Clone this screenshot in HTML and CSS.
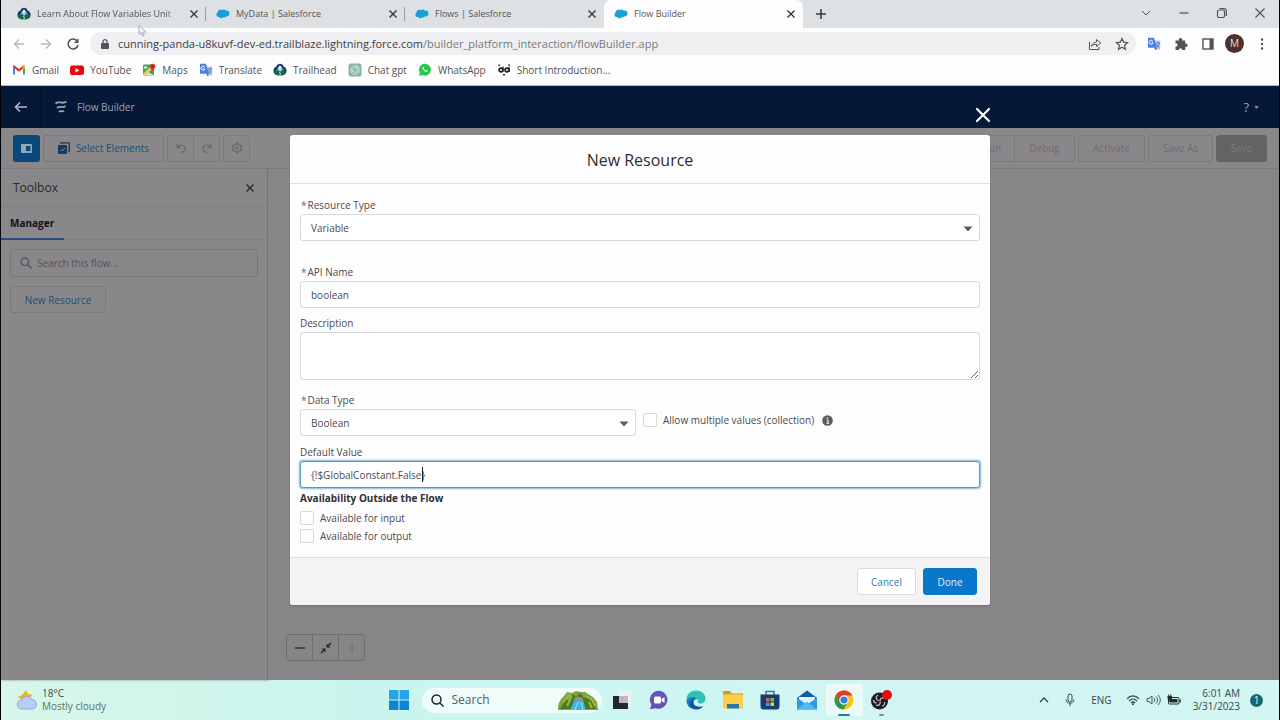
FILE: index.html
```html
<!DOCTYPE html>
<html lang="en">
<head>
<meta charset="utf-8">
<title>Flow Builder</title>
<link rel="stylesheet" href="styles.css">
</head>
<body>
<svg class="defs" aria-hidden="true">
  <symbol id="cloud" viewBox="0 0 14 10"><path fill="#16a0d8" d="M3 1.2C4 .3 5.3.5 6 1.3 7 .2 9 .3 9.700 1.700 11.500 1 13.600 2.300 13.500 4.500c0 2-1.800 3.300-3.700 2.900C9.200 8.600 7.700 8.800 6.900 8.300 6 9.900 3.900 9.700 3.300 8.100 1.500 8.300.3 7 .5 5.500.5 4.500 1 4 1.600 3.500 1.300 2.600 2 1.600 3 1.200z"/></symbol>
  <symbol id="trail" viewBox="0 0 14 14"><path fill="#1d4068" d="M7 .8c2 0 3.200 1.200 3.500 2.600 1.800.5 3.100 2.300 3.100 4.400 0 2.500-1.600 4.200-3.600 4.400H4C2 12 .4 10.300.4 7.800c0-2.100 1.300-3.900 3.100-4.400C3.800 2 5 .8 7 .8z"/><path fill="#8fd0ee" d="M7 2.500 11.600 8.500H2.400z"/><path fill="#fff" d="m7 2.500 2 2.700-1 .4-1-.7-1 .8-1-.5z"/><path fill="#1e6b45" d="M1.500 8.500 4 6.500l3 2 3-2 2.500 2c0 2-1.500 3.700-3.500 3.700H5c-2 0-3.500-1.700-3.500-3.700z"/><path d="M7.300 8.500c-2 1 1.600 2-.8 3.700" fill="none" stroke="#e5f3e2"/></symbol>
  <symbol id="x" viewBox="0 0 10 10"><path d="M1.500 1.500l7 7m0-7l-7 7" fill="none" stroke="currentColor" stroke-width="1.400"/></symbol>
  <symbol id="translate" viewBox="0 0 14 14"><path fill="#b9c9ea" d="M6 3.500h7.200v9.300H8z"/><path fill="#4b80e8" d="M1 .8h6l3 10H1z"/><path fill="#2b5bc2" d="m7.500 10.800 2.500 0-1.500 2.500z"/><path d="M6 5.700H4.300M5.700 4A2 2 0 1 0 6 6" stroke="#fff" fill="none"/><path d="M9 6.200h4M11 5v1.200M12.400 6.500c-.4 1.800-1.500 3-2.700 3.800M9.800 7.500c.5 1.400 1.500 2.300 2.700 3" stroke="#3f6fc4" stroke-width=".8" fill="none"/></symbol>
  <symbol id="down" viewBox="0 0 10 6"><path d="M.5.500h9L5 5.600z" fill="currentColor"/></symbol>
</svg>
<div class="screen">
  <header class="browser">
    <div class="tabstrip">
      <div class="tab"><svg class="i14"><use href="#trail"/></svg><span class="tab-title fade">Learn About Flow Variables Unit</span><button class="tab-x" aria-label="Close tab"><svg class="i10"><use href="#x"/></svg></button></div>
      <div class="tab"><svg class="cloud"><use href="#cloud"/></svg><span class="tab-title">MyData | Salesforce</span><button class="tab-x" aria-label="Close tab"><svg class="i10"><use href="#x"/></svg></button></div>
      <div class="tab last"><svg class="cloud"><use href="#cloud"/></svg><span class="tab-title">Flows | Salesforce</span><button class="tab-x" aria-label="Close tab"><svg class="i10"><use href="#x"/></svg></button></div>
      <div class="tab active"><svg class="cloud"><use href="#cloud"/></svg><span class="tab-title">Flow Builder</span><button class="tab-x" aria-label="Close tab"><svg class="i10"><use href="#x"/></svg></button></div>
      <button class="new-tab" aria-label="New tab"><svg width="12" height="12" viewBox="0 0 12 12"><path d="M6 1v10M1 6h10" stroke="currentColor" stroke-width="1.500"/></svg></button>
      <div class="win">
        <button aria-label="Search tabs"><svg width="12" height="12" viewBox="0 0 12 12"><path d="m2 4 4 4 4-4" fill="none" stroke="currentColor"/></svg></button>
        <button aria-label="Minimize"><svg width="12" height="12" viewBox="0 0 12 12"><path d="M1.500 6h9" stroke="currentColor" stroke-width="1.200"/></svg></button>
        <button aria-label="Restore"><svg width="12" height="12" viewBox="0 0 12 12"><rect x="1.500" y="3" width="7" height="7.500" rx="1.500" fill="none" stroke="currentColor" stroke-width="1.200"/><path d="M3.500 1.500H8a2.200 2.200 0 0 1 2.300 2.200V9" fill="none" stroke="currentColor" stroke-width="1.200"/></svg></button>
        <button aria-label="Close"><svg width="12" height="12" viewBox="0 0 12 12"><path d="m1.500 1.500 9 9m0-9-9 9" stroke="currentColor" stroke-width="1.100"/></svg></button>
      </div>
    </div>
    <div class="navbar">
      <button class="nav dim" aria-label="Back"><svg width="12" height="12" viewBox="0 0 12 12"><path d="M11 6H1.500M6 1.500 1.500 6 6 10.500" fill="none" stroke="currentColor" stroke-width="1.300"/></svg></button>
      <button class="nav dim" aria-label="Forward"><svg width="12" height="12" viewBox="0 0 12 12"><path d="M1 6h9.500M6 1.500 10.500 6 6 10.500" fill="none" stroke="currentColor" stroke-width="1.300"/></svg></button>
      <button class="nav" aria-label="Reload"><svg width="14" height="14" viewBox="0 0 14 14"><path d="M11.500 4.500A5 5 0 1 0 12 8" fill="none" stroke="currentColor" stroke-width="1.500"/><path d="M12.500 1v5H8z" fill="currentColor"/></svg></button>
      <div class="omnibox">
        <svg width="8" height="10" viewBox="0 0 8 10"><rect y="4" width="8" height="6" rx="1" fill="#4f5256"/><path d="M2 4.500V2.700a2 2 0 0 1 4 0v1.800" fill="none" stroke="#4f5256" stroke-width="1.200"/></svg>
        <span class="url"><b>cunning-panda-u8kuvf-dev-ed.trailblaze.lightning.force.com</b>/builder_platform_interaction/flowBuilder.app</span>
        <button aria-label="Share"><svg width="14" height="14" viewBox="0 0 14 14"><path d="M1.500 5v7.500h9.500V10" fill="none" stroke="currentColor"/><path d="M3.500 9.500C4 6.500 6 5.300 8.500 5V2.500L12.800 6 8.500 9.500V7.300c-2 0-3.700.6-5 2.200z" fill="none" stroke="currentColor"/></svg></button>
        <button aria-label="Bookmark"><svg width="14" height="14" viewBox="0 0 14 14"><path d="m7 1.500 1.600 3.700 4 .4-3 2.700.9 4L7 10.200l-3.500 2.100.9-4-3-2.700 4-.4z" fill="none" stroke="currentColor" stroke-width="1.200"/></svg></button>
      </div>
      <button class="nav" aria-label="Google Translate"><svg class="i14"><use href="#translate"/></svg></button>
      <button class="nav" aria-label="Extensions"><svg width="14" height="14" viewBox="0 0 14 14"><path fill="currentColor" d="M1.500 3.500h3.300a1.800 1.800 0 1 1 3.400 0h3v3a1.800 1.800 0 1 1 0 3.400v3H8.300a1.700 1.700 0 1 0-3.400 0H1.500V9.500a1.600 1.600 0 1 0 0-3.100z"/></svg></button>
      <button class="nav" aria-label="Side panel"><svg width="12" height="12" viewBox="0 0 12 12"><rect x="1" y="1" width="10" height="10" fill="none" stroke="currentColor" stroke-width="1.400"/><path d="M7.500 1H11v10H7.500z" fill="currentColor"/></svg></button>
      <button class="nav" aria-label="Profile"><span class="avatar">M</span></button>
      <button class="nav" aria-label="Menu"><svg width="4" height="14" viewBox="0 0 4 14" fill="currentColor"><circle cx="2" cy="2.500" r="1.200"/><circle cx="2" cy="7" r="1.200"/><circle cx="2" cy="11.500" r="1.200"/></svg></button>
    </div>
    <nav class="bookmarks">
      <a href="#"><svg class="i14" viewBox="0 0 14 14"><path d="M1 2.500 3 3v8.500H1.500L1 11z" fill="#4285f4"/><path d="m11 3 2-.500V11l-.5.500H11z" fill="#34a853"/><path d="M1.500 3.200 7 7.300l5.500-4.100" fill="none" stroke="#e0382c" stroke-width="2.200"/><path d="M11 3.500 13 2v3l-2 1.500z" fill="#fbbc04"/></svg>Gmail</a>
      <a href="#"><svg class="i14" viewBox="0 0 14 14"><rect y="2.500" width="14" height="9.500" rx="2.200" fill="#e8050d"/><path d="m5.500 5 4 2.200-4 2.300z" fill="#fff"/></svg>YouTube</a>
      <a href="#"><svg class="i14" viewBox="0 0 14 14"><rect x="1" y="1.500" width="11" height="11" rx="1.500" fill="#3ba65b"/><path d="m1 11 9-9h2v2l-8.500 8.500H2z" fill="#f8cf42"/><path d="m6.500 9 5.500 3.500H3.500z" fill="#d9dce0"/><path d="M2 3.500h3v2H2z" fill="#eaf5ee"/><path d="M10.500 8.500C10 6.500 7.800 5.500 7.800 3.500a2.800 2.800 0 0 1 5.600 0c0 2-2.300 3-2.900 5z" fill="#d9342b"/><circle cx="10.600" cy="3.500" r="1" fill="#7b1d18"/></svg>Maps</a>
      <a href="#"><svg class="i14"><use href="#translate"/></svg>Translate</a>
      <a href="#"><svg class="i14"><use href="#trail"/></svg>Trailhead</a>
      <a href="#"><svg class="i14" viewBox="0 0 14 14"><rect x=".5" y=".5" width="13" height="13" rx="2.500" fill="#83b5a2"/><g fill="none" stroke="#e3f1eb" stroke-width=".8"><circle cx="7" cy="7" r="4.300"/><path d="M7 4.500 9.200 5.800v2.500L7 9.500 4.800 8.300V5.800zM7 4.500l3.500-1M9.200 8.300 10.500 10M4.800 8.300 3 7"/></g></svg>Chat gpt</a>
      <a href="#"><svg class="i14" viewBox="0 0 14 14"><path d="m1 13 .9-3.100A6 6 0 1 1 4.200 12z" fill="#25c94c"/><path d="M4.700 4c.7-.7 1 0 1.400 1-.8.9-.3 1 .4 1.800.9.700 1 1 1.700.300 1.200.5 2 .8 1.200 1.500C8 10.200 3.500 6 4.700 4z" fill="#fff"/></svg>WhatsApp</a>
      <a href="#"><svg class="i14" viewBox="0 0 14 14"><path d="M1 2 3.500 1 2 3.500zM11 1l2.500 1L12 3.500z" fill="#222"/><g fill="none" stroke="#222" stroke-width="1.800"><circle cx="4" cy="7" r="1.900"/><circle cx="10" cy="7" r="1.900"/></g><path d="M6 3.500v5M12.200 4v5" stroke="#222" stroke-width="1.200"/><path d="M5.500 11h3L7 13z" fill="#222"/></svg>Short Introduction...</a>
    </nav>
    <svg class="pointer" width="9" height="13" viewBox="0 0 9 13"><path d="M1 1v9.500l2.300-2 1.500 3.500 1.400-.7-1.500-3.200H8z" fill="#f4f4f6" stroke="#9a9da3" stroke-width=".8"/></svg>
  </header>

  <main class="app">
    <div class="app-head">
      <button class="app-back" aria-label="Back"><svg width="14" height="12" viewBox="0 0 14 12"><path d="M13 6H2M6 1.500 1.500 6 6 10.500" fill="none" stroke="currentColor" stroke-width="1.600"/></svg></button>
      <svg width="14" height="14" viewBox="0 0 14 14"><path d="M1.500 3.500c3.500-3.500 6 1.500 11-2M3 8c3-3 5 .8 8.500-2M5 12c2-2.500 3 .6 5-1.200" fill="none" stroke="#9ba5b5" stroke-width="1.800"/></svg>
      <span class="app-name">Flow Builder</span>
      <button class="help" aria-label="Help">? <svg width="5" height="3"><use href="#down"/></svg></button>
    </div>
    <div class="tools">
      <button class="toggle" aria-label="Toggle toolbox"><svg width="11" height="9" viewBox="0 0 11 9"><rect width="11" height="9" rx="1" fill="#8fa9bb"/><path d="M5 2h4.500v5H5z" fill="#09487a"/></svg></button>
      <button class="tool select-el"><svg width="12" height="12" viewBox="0 0 12 12"><path d="M3 2V.8h8.200V9H10" fill="none" stroke="#153b63" stroke-width="1.300"/><rect y="3" width="9" height="9" rx="1" fill="#153b63"/><path d="m2.500 7.500 1.500 1.500 3-3" fill="none" stroke="#8a878b"/></svg>Select Elements</button>
      <div class="pair"><button class="tool icon" aria-label="Undo"><svg width="12" height="12" viewBox="0 0 12 12"><path d="M2 2v3.500h3.500M2 5c3-3 8-2 8 1.500C10 8.500 9 10 6 10.500" fill="none" stroke="currentColor" stroke-width="1.300"/></svg></button><button class="tool icon" aria-label="Redo"><svg width="12" height="12" viewBox="0 0 12 12"><path d="M10 2v3.500H6.500M10 5C7 2 2 3 2 6.500 2 8.500 3 10 6 10.500" fill="none" stroke="currentColor" stroke-width="1.300"/></svg></button></div>
      <button class="tool icon" aria-label="Settings"><svg width="12" height="12" viewBox="0 0 12 12"><circle cx="6" cy="6" r="4" fill="none" stroke="currentColor" stroke-width="1.300"/><circle cx="6" cy="6" r="1.500" fill="currentColor"/><path d="M6 0v2M6 10v2M0.800 3l1.700 1M9.500 8l1.700 1M.8 9l1.700-1M9.500 4l1.700-1" stroke="currentColor" stroke-width="1.300"/></svg></button>
      <div class="actions">
        <div class="pair"><button class="tool act run">Run</button><button class="tool act debug">Debug</button></div>
        <button class="tool act activate">Activate</button>
        <button class="tool act saveas">Save As</button>
        <button class="tool act save">Save</button>
      </div>
    </div>
    <div class="work">
      <aside class="toolbox">
        <div class="tb-head"><h2>Toolbox</h2><button aria-label="Close toolbox"><svg class="i10"><use href="#x"/></svg></button></div>
        <div class="tb-tabs"><button class="tb-tab">Manager</button></div>
        <div class="tb-body">
          <label class="search"><svg width="12" height="12" viewBox="0 0 12 12"><circle cx="4.800" cy="4.800" r="3.800" fill="none" stroke="#57555a" stroke-width="1.300"/><path d="m7.500 7.500 4 4" stroke="#57555a" stroke-width="1.500"/></svg><input type="search" placeholder="Search this flow..." aria-label="Search this flow"></label>
          <button class="tool new-res">New Resource</button>
        </div>
      </aside>
      <section class="canvas">
        <div class="pair">
          <button class="tool icon zoom" aria-label="Zoom out"><svg width="12" height="12" viewBox="0 0 12 12"><path d="M1 6h10" stroke="#38363b" stroke-width="1.500"/></svg></button><button class="tool icon zoom" aria-label="Fit"><svg width="12" height="12" viewBox="0 0 12 12"><path d="m1 11 3-3M11 1 8 4" stroke="#2b292e" stroke-width="1.600"/><path d="M1.500 6.500h4v4zM6.500 1.500v4h4z" fill="#2b292e"/></svg></button><button class="tool icon zoom" aria-label="Zoom in"><svg width="12" height="12" viewBox="0 0 12 12"><path d="M1 6h10M6 1v10" stroke="#6f6c71" stroke-width="1.200"/></svg></button>
        </div>
      </section>
    </div>

    <div class="overlay">
      <div class="modal-wrap">
        <button class="modal-x" aria-label="Close dialog"><svg width="16" height="16" viewBox="0 0 16 16"><path d="m2 2 12 12M14 2 2 14" stroke="#fff" stroke-width="2.200" stroke-linecap="round"/></svg></button>
        <form class="modal" role="dialog" aria-labelledby="title">
          <h1 id="title">New Resource</h1>
          <div class="fields">
            <div class="field first">
              <label for="rtype"><abbr>*</abbr>Resource Type</label>
              <div class="sel"><select id="rtype"><option>Variable</option></select><svg width="10" height="6"><use href="#down"/></svg></div>
            </div>
            <div class="field api">
              <label for="api"><abbr>*</abbr>API Name</label>
              <input id="api" type="text" value="boolean">
            </div>
            <div class="field desc">
              <label for="desc">Description</label>
              <textarea id="desc"></textarea>
            </div>
            <div class="split">
              <div class="field">
                <label for="dtype"><abbr>*</abbr>Data Type</label>
                <div class="sel"><select id="dtype"><option>Boolean</option></select><svg width="10" height="6"><use href="#down"/></svg></div>
              </div>
              <div class="multi">
                <label class="check"><input type="checkbox">Allow multiple values (collection)</label>
                <svg width="11" height="11" viewBox="0 0 11 11"><circle cx="5.500" cy="5.500" r="5.300" fill="#5c5b5e"/><path d="M4.500 5h1.500v3.300M4.300 8.200h2.900" fill="none" stroke="#fff"/><circle cx="5.500" cy="3" r=".8" fill="#fff"/></svg>
              </div>
            </div>
            <div class="field">
              <label for="defval">Default Value</label>
              <div class="focus"><input id="defval" type="text" value="{!$GlobalConstant.False}"><span class="caret"></span></div>
            </div>
            <fieldset>
              <legend>Availability Outside the Flow</legend>
              <label class="check"><input type="checkbox">Available for input</label>
              <label class="check"><input type="checkbox">Available for output</label>
            </fieldset>
          </div>
          <footer><button type="button" class="btn">Cancel</button><button type="button" class="btn primary">Done</button></footer>
        </form>
      </div>
    </div>
  </main>

  <div class="taskbar">
    <div class="weather">
      <svg width="22" height="22" viewBox="0 0 22 22"><path d="m10 1 2 4 4.500.5-3 4L15 14H4l1-4-3.500-2L6 6z" fill="#e8b62f"/><path d="M6 20a4.500 4.500 0 0 1-.5-9 5.500 5.500 0 0 1 10.300-.5A4.800 4.800 0 0 1 16.500 20z" fill="#b8cdf3" stroke="#8fa8d8"/></svg>
      <div><div class="temp">18°C</div><div class="sky">Mostly cloudy</div></div>
    </div>
    <div class="dock">
      <button aria-label="Start"><svg width="20" height="20" viewBox="0 0 20 20"><path d="M0 0h9.500v9.500H0zM10.500 0H20v9.500h-9.500z" fill="#2aa3e6"/><path d="M0 10.500h9.500V20H0zM10.500 10.500H20V20h-9.500z" fill="#0e83d3"/></svg></button>
      <label class="find"><svg width="13" height="13" viewBox="0 0 13 13"><circle cx="5.500" cy="5.500" r="4.500" fill="none" stroke="#20272b" stroke-width="1.500"/><path d="m9 9 3.500 3.500" stroke="#20272b" stroke-width="1.500"/></svg><input type="search" placeholder="Search" aria-label="Search">
        <svg width="42" height="20" viewBox="0 0 42 20"><path d="M1 20C1 12 4 9 7 6l3-4 5 1 4-2 5 1 4 0 3 2 5 3 4 5 1 8z" fill="#7fa53a"/><path d="M3 19 9 9l3 2 4-7 3 3 4-4 4 5 5-1 7 12z" fill="#4c7a22"/><path d="M6 12 12 5l3 3M29 6l6 4 3 6M32 12l3 6M10 16l4-8" fill="none" stroke="#9ab741" stroke-width="2"/><path d="M17 9c2-3 7-3 9 0l1 5H16z" fill="#7d98a0"/><path d="m17 12 9-1 3 9H13z" fill="#39b8e3"/><path d="m21 12-3 8m6-8 2 8" stroke="#9be5f4"/></svg></label>
      <button aria-label="Task view"><svg width="20" height="20" viewBox="0 0 20 20"><path d="M6 1h13v13H6z" fill="#eef1f2"/><path d="M1 6h15v13H1z" fill="#20282c"/><path d="M7 6h9v7H7z" fill="#bdb8bd"/></svg></button>
      <button aria-label="Chat"><svg width="20" height="20" viewBox="0 0 20 20"><path d="M10 .8a9 9 0 1 1-3.500 17.500L1 19.300l1.400-4.500A9 9 0 0 1 10 .8z" fill="#6554b5"/><rect x="5" y="6.500" width="7" height="7" rx="1.500" fill="#fff"/><path d="m12.500 9 3-2v6l-3-2z" fill="#fff"/></svg></button>
      <button aria-label="Edge"><svg width="20" height="20" viewBox="0 0 20 20"><path d="M.5 11C0 4.500 4.500.5 10 .5c6 0 9.500 4 9.500 8 0 3.500-2.500 5-5 5-1.800 0-3-.7-3-1.500 0-.6.8-1 .8-2.200C12.300 8 10.500 7 8.500 7 4.500 7 1.500 9 .5 11z" fill="#2fc2b0"/><path d="M.5 11c1-3 4-4.500 7.500-4 2 0 3.800 1 4.200 2.500C9 8.500 7 10.500 7.500 13c.5 3 4 5 9.500 3.200C15 19 12.500 19.500 10 19.500 4.500 19.500.7 15.500.5 11z" fill="#1679ce"/><path d="M3 15C4 11 6 9 8.500 9 7 10.500 7 12 7.500 13.500c1 3 5 4.200 9.500 2.700-4 4.600-11 3.800-14-1.200z" fill="#0b5798"/></svg></button>
      <button aria-label="File Explorer"><svg width="20" height="18" viewBox="0 0 20 18"><path d="M0 0h7l2 2.500h11V5H0z" fill="#d79a20"/><rect y="3.500" width="20" height="14" rx="1" fill="#fbcf4b"/><path d="M4 13h12v4.500H4z" fill="#2c75ae"/></svg></button>
      <button aria-label="Microsoft Store"><svg width="20" height="20" viewBox="0 0 20 20"><path d="M6 5V1.500h8V5" fill="none" stroke="#347cae" stroke-width="1.500"/><path d="M.5 4.500h19V16q0 3.500-3 3.500h-13Q.5 19.500.5 16z" fill="#143f70"/><path d="M6 8h3.500v3.500H6z" fill="#ee5b38"/><path d="M10.500 8H14v3.500h-3.500z" fill="#80bb3d"/><path d="M6 12.500h3.500V16H6z" fill="#35a4e5"/><path d="M10.500 12.500H14V16h-3.500z" fill="#f6c73e"/></svg></button>
      <button aria-label="Mail"><svg width="20" height="20" viewBox="0 0 20 20"><path d="m0 8 10-7.500L20 8v3H0z" fill="#145c9e"/><path d="M2 7h16v8H2z" fill="#e5f4fc"/><path d="m0 8 10 6.500L20 8v11.500H0z" fill="#2b9be0"/><path d="m0 19.500 10-8 10 8z" fill="#54baf0"/></svg></button>
      <button class="on" aria-label="Chrome"><svg width="20" height="20" viewBox="0 0 20 20"><circle cx="10" cy="10" r="9.500" fill="#fbc316"/><path d="M1.800 5.200A9.500 9.500 0 0 1 18.300 5.500H10L6 12z" fill="#e33b2e"/><path d="M1.800 5.200 6 12l4 2.500-2.500 4.700A9.500 9.500 0 0 1 1.800 5.200z" fill="#269b4b"/><path d="m13.800 12-4.200 7.500-2-.3L10 14z" fill="#269b4b"/><circle cx="10" cy="10" r="4.700" fill="#fff"/><circle cx="10" cy="10" r="3.600" fill="#3a7be0"/></svg></button>
      <button class="idle" aria-label="OBS Studio"><svg width="22" height="20" viewBox="0 0 22 20"><circle cx="9.500" cy="11" r="8.500" fill="#1f1d20"/><path d="M8 5c-3 2-2 5 1 5.500M14 8.500c-2-1.500-4 0-4 2.500M6 15c3 1 5-1 4-3.500M3.500 10c0 2 1 3 3 3M12 16c2 0 3-2 2.500-4" fill="none" stroke="#c6c3c7" stroke-width="1.200"/><circle cx="17" cy="5" r="5" fill="#ec0b13"/></svg></button>
    </div>
    <div class="tray">
      <svg width="10" height="10" viewBox="0 0 10 10"><path d="m1 7 4-4 4 4" fill="none" stroke="currentColor" stroke-width="1.400"/></svg>
      <svg class="mic" width="10" height="14" viewBox="0 0 10 14"><rect x="3" y="1" width="4" height="8" rx="2" fill="none" stroke="currentColor"/><path d="M1 6.500c0 5 8 5 8 0M5 10.500V13" fill="none" stroke="currentColor"/></svg>
      <span class="eng">ENG</span>
      <svg width="14" height="12" viewBox="0 0 14 12"><g fill="none" stroke="currentColor" stroke-width="1.200"><path d="M1 4.800c3.500-4 8.500-4 12 0M3 7c2.500-2.700 5.500-2.700 8 0M5 9c1.300-1.300 2.700-1.300 4 0"/></g><circle cx="7" cy="10.300" r="1" fill="currentColor"/></svg>
      <svg width="15" height="12" viewBox="0 0 15 12"><path d="M1 4.500h2L6 2v8L3 7.500H1zM8 4c1 1 1 3 0 4M10 2.500c2 2 2 5 0 7M12 1c3 3 3 7 0 10" fill="none" stroke="currentColor" stroke-width=".9"/></svg>
      <svg width="14" height="12" viewBox="0 0 14 12"><rect x="1.500" y="3.500" width="10.500" height="6.500" rx="1" fill="none" stroke="#202b2c"/><path d="M3 5h7.500v3.500H3z" fill="#202b2c"/><path d="M13.200 5.500v3" stroke="#202b2c" stroke-width="1.300"/><path d="M.5 2h4.500v2.500a2 2 0 0 1-1.700 1.800V8h-1V6.300A2 2 0 0 1 .5 4.500zM1.200.5h1V2h-1zM3.300.5h1V2h-1z" fill="#202b2c"/></svg>
      <div class="clock"><div>6:01 AM</div><div>3/31/2023</div></div>
      <span class="count">1</span>
    </div>
  </div>
</div>
</body>
</html>
```
FILE: styles.css
```css
* { box-sizing: border-box; }
body { margin: 0; background: #000; font-family: "Open Sans", "Noto Sans", sans-serif; font-size: 10px; line-height: 18px; color: #4b4a4d; }
button, input, select, textarea { font: inherit; color: inherit; }
button { display: inline-flex; align-items: center; justify-content: center; border: 0; background: none; padding: 0; }
svg { display: block; flex: none; }
a { color: inherit; text-decoration: none; }
.defs { position: absolute; width: 0; height: 0; }
.i14 { width: 14px; height: 14px; }
.i10 { width: 10px; height: 10px; }
.cloud { width: 14px; height: 10px; }
.screen { min-height: 100vh; display: flex; flex-direction: column; padding: 0 1px; overflow: hidden; }

/* Browser chrome */
.browser { position: relative; background: #fefdfe; color: #505357; border-bottom: 1px solid #a9b9c5; }
.tabstrip { display: flex; height: 28px; background: #dde1e4; padding-left: 6px; }
.tab { flex: 0 1 199px; min-width: 0; display: flex; align-items: center; gap: 6px; padding: 0 7px 0 10px; position: relative; }
.tab:not(.last):not(.active)::after { content: ""; position: absolute; right: 0; top: 7px; height: 14px; border-right: 1px solid #9a9ea3; }
.tab.active { background: #fefdfe; border-radius: 7px 7px 0 0; }
.tab-title { flex: 1; min-width: 0; overflow: hidden; white-space: nowrap; font-size: 9px; }
.fade { -webkit-mask-image: linear-gradient(90deg, #000 88%, transparent); mask-image: linear-gradient(90deg, #000 88%, transparent); }
.tab-x { color: #33363a; }
.new-tab { width: 36px; color: #33363a; }
.win { display: flex; margin-left: auto; height: 25px; }
.win button { width: 38px; }
.navbar { display: flex; align-items: center; height: 31px; padding: 0 4px; }
.nav { width: 27px; height: 27px; }
.dim { color: #b4b6b9; }
.omnibox { flex: 1; min-width: 0; display: flex; align-items: center; height: 23px; margin: 0 4px; padding: 0 5px 0 11px; gap: 9px; border-radius: 12px; background: #efeff1; }
.omnibox button { width: 18px; }
.url { flex: 1; min-width: 0; overflow: hidden; white-space: nowrap; font-size: 11px; color: #77797d; }
.url b { font-weight: 400; color: #3c3e42; }
.avatar { width: 19px; height: 19px; border-radius: 50%; background: #4e302e; color: #e8dcdc; line-height: 19px; text-align: center; }
.bookmarks { display: flex; align-items: center; gap: 11px; height: 26px; padding: 0 11px 4px; white-space: nowrap; }
.bookmarks a { display: flex; align-items: center; gap: 6px; }
.pointer { position: absolute; left: 137px; top: 24px; }

/* Flow Builder */
.app { position: relative; flex: 1; display: flex; flex-direction: column; background: #8a878b; }
.app-head { display: flex; align-items: center; height: 42px; background: #051835; color: #9ba5b5; padding-right: 20px; }
.app-back { width: 40px; height: 42px; margin-right: 13px; border-right: 1px solid #03112a; color: #b1bac6; }
.app-name { margin-left: 9px; }
.help { margin-left: auto; gap: 5px; font-size: 13px; }
.tools { display: flex; align-items: center; height: 41px; gap: 3px; padding: 0 12px; border-bottom: 1px solid #7d7a7e; }
.toggle { width: 27px; height: 27px; border-radius: 3px; background: #09487a; }
.tool { height: 27px; border: 1px solid #7b787c; border-radius: 3px; color: #234c70; white-space: nowrap; }
.select-el { gap: 6px; width: 121px; }
.icon { width: 27px; color: #6c696e; }
.pair { display: flex; }
.pair .tool + .tool { margin-left: -1px; border-radius: 0 3px 3px 0; }
.pair .tool:first-child { border-radius: 3px 0 0 3px; }
.actions { display: flex; gap: 3px; margin-left: auto; }
.act { color: #706d72; }
.run { width: 46px; }
.debug { width: 61px; }
.activate { width: 67px; }
.saveas { width: 65px; }
.save { width: 51px; background: #656266; border-color: #656266; color: #7b787c; }
.work { flex: 1; display: flex; }
.toolbox { width: 267px; border-right: 1px solid #757276; box-shadow: 1px 0 2px #7b787c; }
.tb-head { display: flex; align-items: center; justify-content: space-between; height: 38px; padding: 0 12px; border-bottom: 1px solid #838084; color: #29272b; }
.tb-head h2 { margin: 0; font-size: 12px; font-weight: 400; }
.tb-tabs { height: 33px; border-bottom: 1px solid #828083; }
.tb-tab { height: 33px; padding: 0 10px 0 9px; border-bottom: 2px solid #294c7e; color: #111014; font-weight: 700; }
.tb-body { padding: 9px; }
.search { display: flex; align-items: center; gap: 5px; height: 28px; padding: 0 9px; border: 1px solid #79767a; border-radius: 3px; }
.search input, .find input { flex: 1; min-width: 0; width: 0; border: 0; padding: 0; background: none; outline: 0; }
.search input::placeholder { color: #545256; }
.new-res { margin-top: 9px; width: 96px; }
.canvas { flex: 1; display: flex; align-items: flex-end; padding: 0 18px 19px; background: #888589; }
.zoom { border-color: #716e73; }

/* New Resource dialog */
.overlay { position: absolute; inset: 0; display: flex; justify-content: center; align-items: flex-start; padding-top: 21px; }
.modal-wrap { width: 700px; max-width: 92%; display: flex; flex-direction: column; }
.modal-x { align-self: flex-end; width: 14px; height: 16px; margin-bottom: 12px; }
.modal { background: #fefdfe; border-radius: 3px; box-shadow: 0 1px 2px #716e73; }
h1 { margin: 0; height: 49px; line-height: 50px; font-size: 16px; font-weight: 400; text-align: center; color: #302f33; border-bottom: 1px solid #e0dfe1; }
.fields { padding: 12px 10px; }
.field { display: flex; flex-direction: column; }
.first { margin-bottom: 22px; }
.api { margin-bottom: 6px; }
.desc { margin-bottom: 11px; }
abbr { margin: 0 1px; color: #69676b; }
.fields input[type=text], select, textarea { width: 100%; height: 27px; margin: 0; padding: 0 10px; border: 1px solid #d9d7da; border-radius: 3px; background: #fff; outline: 0; }
.fields textarea { height: 48px; }
select { appearance: none; }
.sel, .focus { position: relative; }
.sel svg { position: absolute; right: 7px; top: 12px; color: #5c5a5e; }
.split { display: grid; grid-template-columns: 336px 1fr; gap: 7px; margin-bottom: 7px; }
.multi { display: flex; align-items: center; gap: 8px; padding-top: 13px; }
.check { display: flex; align-items: center; gap: 6px; }
.check input { appearance: none; width: 14px; height: 14px; margin: 0; border: 1px solid #d9d7da; border-radius: 2px; background: #fff; }
.fields .focus input { border: 1px solid #4f9bcb; box-shadow: 0 0 2px 1px #7ab8dd; }
.caret { position: absolute; left: 122px; top: 6px; height: 15px; border-left: 1px solid #222; }
fieldset { margin: 1px 0 0; padding: 0; border: 0; }
legend { padding: 0; margin-bottom: 2px; font-weight: 700; color: #302f33; }
footer { display: flex; justify-content: flex-end; align-items: center; gap: 7px; height: 48px; padding: 0 13px; background: #f3f2f4; border-top: 1px solid #dfdde0; border-radius: 0 0 3px 3px; }
.btn { height: 27px; width: 59px; border: 1px solid #dddbde; border-radius: 3px; background: #fff; color: #3179ae; }
.primary { width: 54px; background: #0877cc; border-color: #0877cc; color: #e2f1fb; }

/* Taskbar */
.taskbar { display: grid; grid-template-columns: 1fr auto 1fr; align-items: center; height: 40px; background: linear-gradient(90deg, #d8f6e9, #c9f5ee 28%, #d0f5f3 60%, #d2f6f1); color: #36494a; }
.weather { display: flex; align-items: center; gap: 4px; padding-left: 15px; line-height: 13px; }
.sky { color: #57716e; }
.dock { display: flex; align-items: center; height: 40px; }
.dock button { width: 37px; height: 32px; position: relative; }
.find { display: flex; align-items: center; width: 180px; height: 25px; margin: 0 2px 0 4px; padding: 0 3px 0 9px; gap: 8px; border-radius: 13px; background: #effcfa; font-size: 12px; }
.find input::placeholder { color: #526062; }
.dock .on { background: #eafaf8; border-radius: 3px; }
.on::after, .idle::after { content: ""; position: absolute; bottom: 0; width: 12px; height: 2px; border-radius: 1px; background: #34777d; }
.idle::after { width: 5px; background: #72908f; }
.tray { display: flex; justify-content: flex-end; align-items: center; gap: 6px; padding-right: 16px; }
.mic { margin: 0 10px; }
.eng { margin-right: 8px; }
.clock { margin-left: 6px; text-align: right; line-height: 13px; }
.count { width: 13px; height: 13px; margin-left: 4px; border-radius: 50%; background: #1c6669; color: #dff; line-height: 13px; text-align: center; }
```
